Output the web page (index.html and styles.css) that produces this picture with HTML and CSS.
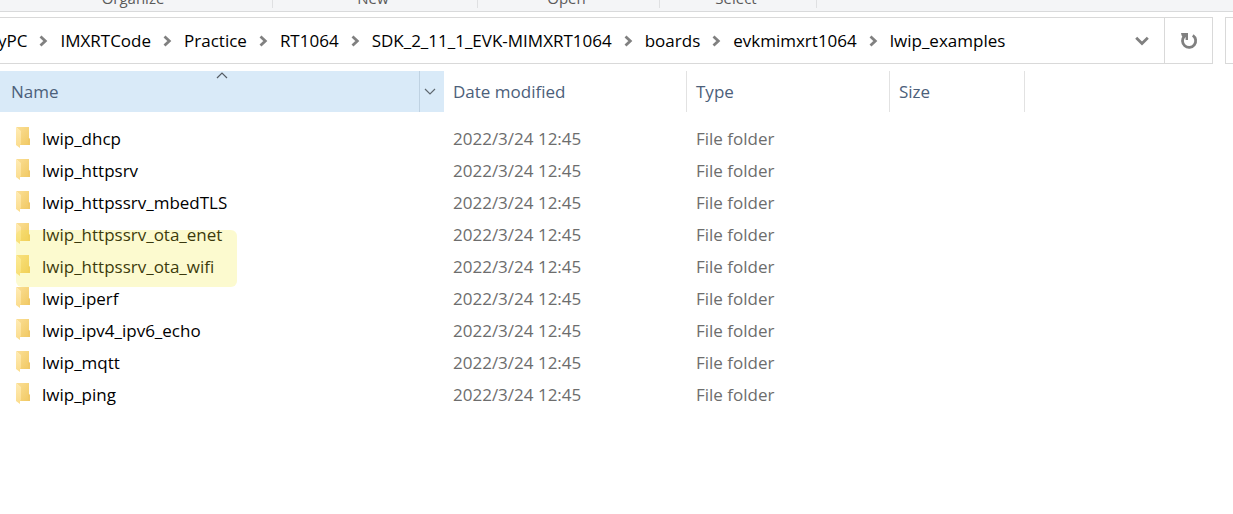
FILE: index.html
```html
<!DOCTYPE html>
<html lang="en">
<head>
<meta charset="UTF-8">
<title>lwip_examples</title>
<link rel="stylesheet" href="styles.css">
</head>
<body>
    <!-- shared icons -->
    <svg class="defs" aria-hidden="true">
        <defs>
            <linearGradient id="folder-back" x1="0" y1="0" x2="1" y2="1">
                <stop offset="0" stop-color="#fbdf97"/>
                <stop offset="1" stop-color="#f1c962"/>
            </linearGradient>
            <linearGradient id="folder-flap" x1="0" y1="0" x2="0" y2="1">
                <stop offset="0" stop-color="#ffebb3"/>
                <stop offset="1" stop-color="#fbdc8c"/>
            </linearGradient>
        </defs>
        <symbol id="folder" viewBox="0 0 14 21">
            <path d="M0 0H13V11L14 12V18H4V4Z" fill="url(#folder-back)"/>
            <path d="M12 11L14 12V18H12Z" fill="#f0c868"/>
            <path d="M0 0L5 4V17L4 18V21L0 18Z" fill="url(#folder-flap)"/>
        </symbol>
        <symbol id="crumb-arrow" viewBox="0 0 9 12">
            <path d="M1.5 1.5L6.3 6L1.5 10.5" fill="none" stroke="#808080" stroke-width="2.8"/>
        </symbol>
    </svg>

    <div class="ribbon">
        <span class="group organize">Organize</span>
        <span class="group new">New</span>
        <span class="group open">Open</span>
        <span class="group select">Select</span>
    </div>

    <div class="toolbar">
        <div class="address">
            <nav class="crumbs" aria-label="Path">
                <a href="#">yPC</a>
                <svg class="arrow"><use href="#crumb-arrow"/></svg>
                <a href="#">IMXRTCode</a>
                <svg class="arrow"><use href="#crumb-arrow"/></svg>
                <a href="#">Practice</a>
                <svg class="arrow"><use href="#crumb-arrow"/></svg>
                <a href="#">RT1064</a>
                <svg class="arrow"><use href="#crumb-arrow"/></svg>
                <a href="#">SDK_2_11_1_EVK-MIMXRT1064</a>
                <svg class="arrow"><use href="#crumb-arrow"/></svg>
                <a href="#">boards</a>
                <svg class="arrow"><use href="#crumb-arrow"/></svg>
                <a href="#">evkmimxrt1064</a>
                <svg class="arrow"><use href="#crumb-arrow"/></svg>
                <a href="#">lwip_examples</a>
            </nav>
            <button class="history" type="button" aria-label="Previous locations">
                <svg width="14" height="10" viewBox="0 0 14 10"><path d="M1.2 1.8L7 7.6L12.8 1.8" fill="none" stroke="#808080" stroke-width="2.8"/></svg>
            </button>
            <button class="refresh" type="button" aria-label="Refresh">
                <svg width="18" height="18" viewBox="0 0 18 18">
                    <path d="M12.8 3.4A6.6 6.6 0 1 1 4.4 4.2" fill="none" stroke="#808080" stroke-width="2.8"/>
                    <path d="M1 1H8V8H5.6V5L3.4 6.2L1.6 3.4Z" fill="#808080"/>
                </svg>
            </button>
        </div>
        <input class="search" type="search" aria-label="Search">
    </div>

    <div class="files">
        <table>
            <colgroup>
                <col class="col-name">
                <col class="col-date">
                <col class="col-type">
                <col class="col-size">
                <col>
            </colgroup>
            <thead>
                <tr>
                    <th class="sorted">
                        <div class="head">
                            <span>Name</span>
                            <button class="filter" type="button" aria-label="Filter by name">
                                <svg width="12" height="8" viewBox="0 0 12 8"><path d="M1 1L6 6L11 1" fill="none" stroke="#5f6870" stroke-width="1.2"/></svg>
                            </button>
                        </div>
                        <svg class="sort" width="12" height="7" viewBox="0 0 12 7"><path d="M1 6L6 1L11 6" fill="none" stroke="#555c63" stroke-width="1.2"/></svg>
                    </th>
                    <th>Date modified</th>
                    <th>Type</th>
                    <th>Size</th>
                    <td></td>
                </tr>
            </thead>
            <tbody>
                <tr><td><svg class="folder"><use href="#folder"/></svg>lwip_dhcp</td><td>2022/3/24 12:45</td><td>File folder</td><td></td><td></td></tr>
                <tr><td><svg class="folder"><use href="#folder"/></svg>lwip_httpsrv</td><td>2022/3/24 12:45</td><td>File folder</td><td></td><td></td></tr>
                <tr><td><svg class="folder"><use href="#folder"/></svg>lwip_httpssrv_mbedTLS</td><td>2022/3/24 12:45</td><td>File folder</td><td></td><td></td></tr>
                <tr><td><svg class="folder"><use href="#folder"/></svg>lwip_httpssrv_ota_enet</td><td>2022/3/24 12:45</td><td>File folder</td><td></td><td></td></tr>
                <tr><td><svg class="folder"><use href="#folder"/></svg>lwip_httpssrv_ota_wifi</td><td>2022/3/24 12:45</td><td>File folder</td><td></td><td></td></tr>
                <tr><td><svg class="folder"><use href="#folder"/></svg>lwip_iperf</td><td>2022/3/24 12:45</td><td>File folder</td><td></td><td></td></tr>
                <tr><td><svg class="folder"><use href="#folder"/></svg>lwip_ipv4_ipv6_echo</td><td>2022/3/24 12:45</td><td>File folder</td><td></td><td></td></tr>
                <tr><td><svg class="folder"><use href="#folder"/></svg>lwip_mqtt</td><td>2022/3/24 12:45</td><td>File folder</td><td></td><td></td></tr>
                <tr><td><svg class="folder"><use href="#folder"/></svg>lwip_ping</td><td>2022/3/24 12:45</td><td>File folder</td><td></td><td></td></tr>
            </tbody>
        </table>
        <div class="marker"></div>
    </div>
</body>
</html>
```
FILE: styles.css
```css
* {
    box-sizing: border-box;
    margin: 0;
    padding: 0;
}
body {
    background: #fff;
    color: #000;
    font: 17px/32px "Open Sans", "Noto Sans", sans-serif;
    overflow-x: hidden;
}
button {
    border: none;
    background: none;
    display: flex;
    align-items: center;
    justify-content: center;
}
.defs {
    position: absolute;
    width: 0;
    height: 0;
}

/* bottom edge of the ribbon */
.ribbon {
    display: flex;
    align-items: flex-end;
    height: 12px;
    padding-bottom: 3px;
    overflow: hidden;
    background: #f4f5f7;
    border-bottom: 1px solid #d9dadb;
}
.group {
    flex: none;
    padding-right: 4px;
    border-right: 1px solid #dfe0e2;
    color: #5a5a5a;
    font-size: 15px;
    line-height: 20px;
    text-align: center;
}
.organize {
    width: 273px;
    padding-right: 6px;
}
.new {
    width: 205px;
}
.open {
    width: 182px;
}
.select {
    width: 157px;
}

/* address bar */
.toolbar {
    display: flex;
    gap: 12px;
    margin: 5px 0 7px;
}
.address {
    flex: 1;
    min-width: 0;
    display: flex;
    height: 47px;
    border: 1px solid #d9d9d9;
    border-left: none;
}
.crumbs {
    flex: 1;
    min-width: 0;
    display: flex;
    align-items: center;
    gap: 12px;
    margin-left: -2px;
    overflow: hidden;
    white-space: nowrap;
}
.crumbs a {
    color: #000;
    text-decoration: none;
}
.arrow {
    flex: none;
    width: 9px;
    height: 12px;
}
.history {
    width: 44px;
}
.refresh {
    width: 48px;
    border-left: 1px solid #d9d9d9;
}
.search {
    flex: none;
    width: 8px;
    border: 1px solid #d9d9d9;
    border-right: none;
    outline: none;
    appearance: none;
}

/* file list */
.files {
    position: relative;
}
table {
    width: 100%;
    table-layout: fixed;
    border-collapse: separate;
    border-spacing: 0;
}
.col-name {
    width: 444px;
}
.col-date {
    width: 243px;
}
.col-type {
    width: 203px;
}
.col-size {
    width: 135px;
}
th {
    height: 41px;
    padding: 0 9px;
    border-right: 1px solid #e2e2e2;
    color: #4c607a;
    font-weight: normal;
    text-align: left;
}
.sorted {
    position: relative;
    padding: 0;
    border-right: none;
    background: #d9eaf8;
}
.head {
    display: flex;
    align-items: stretch;
    justify-content: space-between;
    height: 41px;
    padding-left: 11px;
    line-height: 41px;
}
.filter {
    width: 25px;
    padding-right: 4px;
    border-left: 1px solid #bfd2e2;
}
.sort {
    position: absolute;
    top: 1px;
    left: calc(50% - 6px);
}
td {
    height: 32px;
    padding: 0 9px;
    color: #6d6d6d;
}
tbody::before {
    content: "";
    display: table-row;
    height: 11px;
}
tbody td:first-child {
    padding-left: 16px;
    color: #000;
}
.folder {
    width: 14px;
    height: 21px;
    margin-right: 12px;
    vertical-align: -3px;
}

/* highlighter over the ota examples */
.marker {
    position: absolute;
    top: 159px;
    left: 16px;
    width: 221px;
    height: 57px;
    border-radius: 6px;
    background: rgba(243, 234, 55, 0.24);
    pointer-events: none;
}
```
